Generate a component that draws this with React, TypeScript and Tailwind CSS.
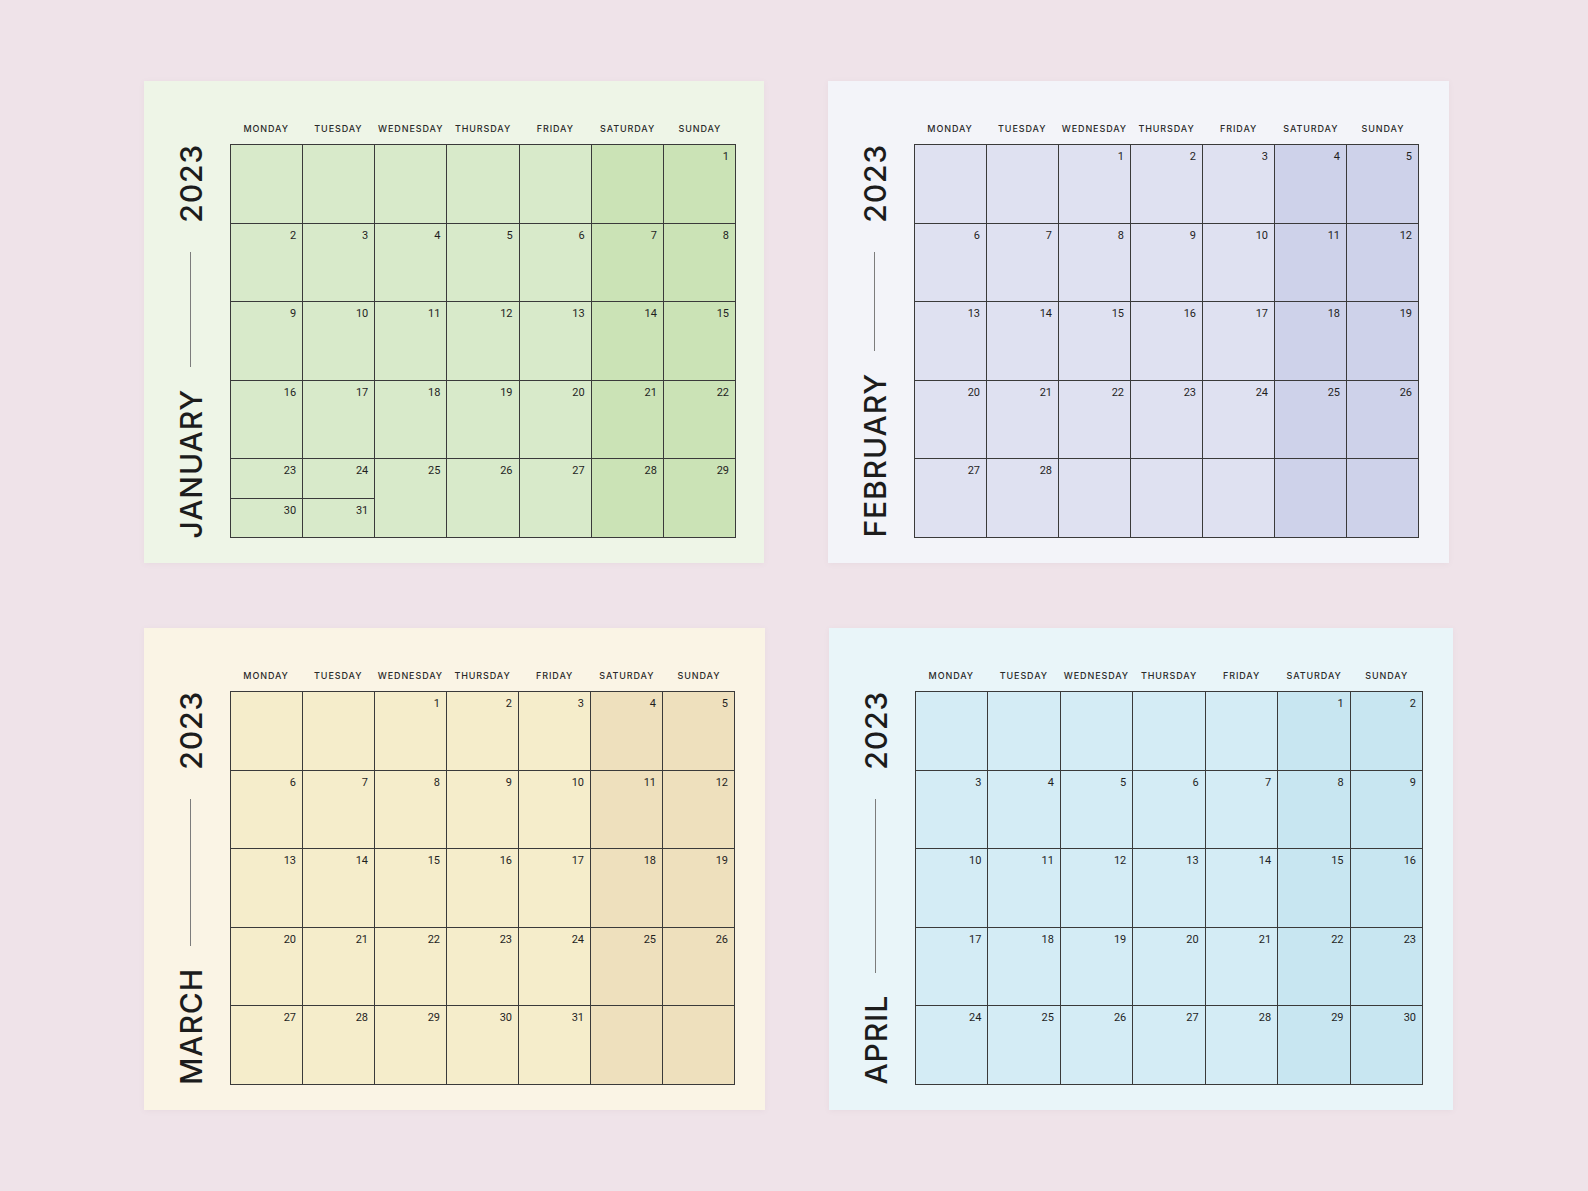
import React from "react";

type Cell = { n?: number; split?: [number, number] };

type Month = {
  name: string;
  offset: number;
  days: number;
  cardW: string;
  gridW: string;
  cardBg: string;
  cellBg: string;
  wkBg: string;
};

const months: Month[] = [
  {
    name: "JANUARY",
    offset: 6,
    days: 31,
    cardW: "w-[620px]",
    gridW: "w-[506px]",
    cardBg: "bg-[#eef5e7]",
    cellBg: "bg-[#d8eaca]",
    wkBg: "bg-[#cbe3b6]",
  },
  {
    name: "FEBRUARY",
    offset: 2,
    days: 28,
    cardW: "w-[621px]",
    gridW: "w-[505px]",
    cardBg: "bg-[#f3f4f9]",
    cellBg: "bg-[#dfe1f1]",
    wkBg: "bg-[#ced2ea]",
  },
  {
    name: "MARCH",
    offset: 2,
    days: 31,
    cardW: "w-[621px]",
    gridW: "w-[505px]",
    cardBg: "bg-[#faf4e5]",
    cellBg: "bg-[#f5edcb]",
    wkBg: "bg-[#eee0bd]",
  },
  {
    name: "APRIL",
    offset: 5,
    days: 30,
    cardW: "w-[624px]",
    gridW: "w-[508px]",
    cardBg: "bg-[#e9f5f9]",
    cellBg: "bg-[#d4ecf5]",
    wkBg: "bg-[#c8e6f1]",
  },
];

const dayNames = ["MONDAY", "TUESDAY", "WEDNESDAY", "THURSDAY", "FRIDAY", "SATURDAY", "SUNDAY"];

function buildCells(offset: number, days: number): Cell[] {
  const cells: Cell[] = [];
  for (let i = 0; i < 35; i++) {
    const d = i - offset + 1;
    if (d >= 1 && d <= days) cells.push({ n: d });
    else cells.push({});
  }
  for (let d = 1; d <= days; d++) {
    const idx = d - 1 + offset;
    if (idx >= 35) {
      const t = idx - 7;
      const top = cells[t].n as number;
      cells[t] = { split: [top, d] };
    }
  }
  return cells;
}

const numCls =
  "font-['Roboto',_'Liberation_Sans',_sans-serif] text-[11px] leading-[13px] text-[#1f1f1f] text-right pt-[5px] pr-[6px]";

function CalendarCard({ m }: { m: Month }) {
  const cells = buildCells(m.offset, m.days);
  return (
    <div
      className={`${m.cardW} ${m.cardBg} h-[482px] pt-[40px] pb-[25px] flex shadow-[0_1px_6px_rgba(120,80,100,0.06)]`}
    >
      <div className="w-[86px] shrink-0 pt-[23px] pl-[30px]">
        <div className="w-[33px] h-[394px] flex flex-col items-center">
          <span className="[writing-mode:vertical-rl] rotate-180 text-[30px] leading-none font-medium tracking-[0.03em] text-[#1c1c1c] font-['Inter',_sans-serif]">
            2023
          </span>
          <div className="w-px flex-1 bg-[#7c7c7c] mt-[29px] mb-[22px]" />
          <span className="[writing-mode:vertical-rl] rotate-180 text-[30px] leading-none font-medium tracking-[0.03em] text-[#1c1c1c] font-['Inter',_sans-serif]">
            {m.name}
          </span>
        </div>
      </div>
      <div className={`${m.gridW} flex flex-col`}>
        <div className="h-[23px] grid grid-cols-7">
          {dayNames.map((d) => (
            <div
              key={d}
              className="text-center text-[9px] leading-[16px] font-medium tracking-[0.1em] text-[#2a2a2a] font-['Inter',_sans-serif]"
            >
              {d}
            </div>
          ))}
        </div>
        <div className="h-[394px] grid grid-cols-7 grid-rows-5 border-l border-t border-[#3a3a3a]">
          {cells.map((c, i) => {
            const bg = i % 7 >= 5 ? m.wkBg : m.cellBg;
            if (c.split) {
              return (
                <div key={i} className={`${bg} border-r border-b border-[#3a3a3a] flex flex-col`}>
                  <div className={`flex-1 border-b border-[#3a3a3a] ${numCls}`}>{c.split[0]}</div>
                  <div className={`flex-1 ${numCls}`}>{c.split[1]}</div>
                </div>
              );
            }
            return (
              <div key={i} className={`${bg} border-r border-b border-[#3a3a3a] ${numCls}`}>
                {c.n ?? ""}
              </div>
            );
          })}
        </div>
      </div>
    </div>
  );
}

export default function App() {
  return (
    <div className="w-[1588px] h-[1191px] bg-[#efe3e9] pt-[81px] pl-[144px] flex flex-col gap-[65px]">
      <div className="flex gap-[64px]">
        <CalendarCard m={months[0]} />
        <CalendarCard m={months[1]} />
      </div>
      <div className="flex gap-[64px]">
        <CalendarCard m={months[2]} />
        <CalendarCard m={months[3]} />
      </div>
    </div>
  );
}
